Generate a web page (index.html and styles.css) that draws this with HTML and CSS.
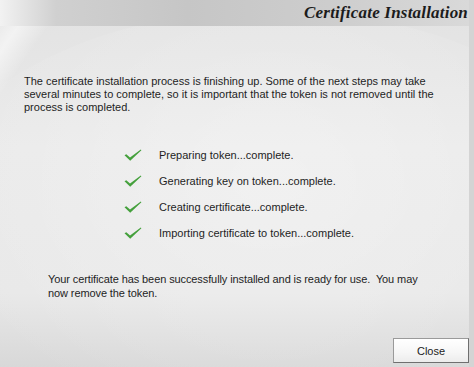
FILE: index.html
```html
<!DOCTYPE html>
<html lang="en">

<head>
    <meta charset="UTF-8">
    <title>Certificate Installation</title>
    <link rel="stylesheet" href="styles.css">
</head>

<body>
    <div class="dialog">
        <div class="swoosh"></div>
        <header class="banner">
            <h1>Certificate Installation</h1>
        </header>

        <p class="intro">The certificate installation process is finishing up. Some of the next steps may take
            several minutes to complete, so it is important that the token is not removed until the
            process is completed.</p>

        <ul class="steps">
            <li><span class="check"><svg viewBox="0 0 18 12" width="18" height="12"><path d="M0.5 6.2 L2.3 5.2 L6 8.6 L16.8 0.4 L17.4 1.2 L6.2 11.8 Z" fill="#44a03c"/></svg></span>Preparing token...complete.</li>
            <li><span class="check"><svg viewBox="0 0 18 12" width="18" height="12"><path d="M0.5 6.2 L2.3 5.2 L6 8.6 L16.8 0.4 L17.4 1.2 L6.2 11.8 Z" fill="#44a03c"/></svg></span>Generating key on token...complete.</li>
            <li><span class="check"><svg viewBox="0 0 18 12" width="18" height="12"><path d="M0.5 6.2 L2.3 5.2 L6 8.6 L16.8 0.4 L17.4 1.2 L6.2 11.8 Z" fill="#44a03c"/></svg></span>Creating certificate...complete.</li>
            <li><span class="check"><svg viewBox="0 0 18 12" width="18" height="12"><path d="M0.5 6.2 L2.3 5.2 L6 8.6 L16.8 0.4 L17.4 1.2 L6.2 11.8 Z" fill="#44a03c"/></svg></span>Importing certificate to token...complete.</li>
        </ul>

        <p class="done">Your certificate has been successfully installed and is ready for use.&nbsp; You may
            now remove the token.</p>

        <footer class="actions">
            <button>Close</button>
        </footer>
    </div>
</body>

</html>
```

FILE: styles.css
```css
body {
    margin: 0;
    padding: 0;
    background-color: #e6e6e6;
    font-family: "Liberation Sans", Arial, sans-serif;
    color: #1e1e1e;
}

.dialog {
    position: relative;
    width: 474px;
    height: 367px;
    overflow: hidden;
    background:
        linear-gradient(125deg, rgba(255, 255, 255, 0) 0px, rgba(255, 255, 255, 0.55) 30px, rgba(255, 255, 255, 0) 55px),
        linear-gradient(180deg, #e2e2e2 0%, #eaeaea 40%, #e8e8e8 80%, #d8d8d8 100%);
    box-sizing: border-box;
    border-right: 5px solid #d4d4d4;
}

.swoosh {
    position: absolute;
    left: -80px;
    top: 10px;
    width: 700px;
    height: 420px;
    border-radius: 50%;
    background: radial-gradient(ellipse at 50% 40%, rgba(255, 255, 255, 0.35), rgba(255, 255, 255, 0) 70%);
}

.banner {
    position: relative;
    height: 26px;
    background: linear-gradient(90deg, #f2f2f2 0%, #d0d0d0 12%, #c6c6c6 40%, #cdcdcd 70%, #d9d9d9 100%);
    display: flex;
    justify-content: flex-end;
    align-items: center;
    padding-right: 1px;
}

.banner h1 {
    margin: 0;
    font-family: "Liberation Serif", "Times New Roman", serif;
    font-style: italic;
    font-weight: bold;
    font-size: 17px;
    color: #1c1c1c;
    letter-spacing: 0.2px;
}

.intro {
    position: relative;
    margin: 49px 0 0 24px;
    width: 410px;
    font-size: 11px;
    line-height: 13px;
}

.steps {
    position: relative;
    list-style: none;
    margin: 34px 0 0 124px;
    padding: 0;
    display: flex;
    flex-direction: column;
    gap: 12px;
    font-size: 11px;
}

.steps li {
    display: flex;
    align-items: center;
    height: 14px;
}

.check {
    display: inline-flex;
    width: 35px;
}

.done {
    position: relative;
    margin: 32px 0 0 48px;
    width: 385px;
    font-size: 11px;
    line-height: 14px;
    letter-spacing: -0.1px;
}

.actions {
    position: absolute;
    left: 0;
    right: 0;
    bottom: 4px;
    display: flex;
    justify-content: flex-end;
}

.actions button {
    width: 76px;
    height: 25px;
    font-family: "Liberation Sans", Arial, sans-serif;
    font-size: 11px;
    color: #222;
    background: linear-gradient(180deg, #ffffff 0%, #f6f6f6 60%, #ececec 100%);
    border: 1px solid #9a9a9a;
    border-right-color: #6f6f6f;
    border-bottom-color: #6f6f6f;
    border-radius: 0;
}
```
